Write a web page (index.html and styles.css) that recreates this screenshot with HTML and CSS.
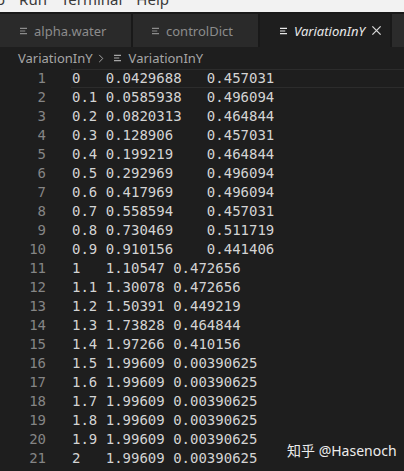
FILE: index.html
```html
<!DOCTYPE html>
<html>
<head>
<meta charset="utf-8">
<link rel="stylesheet" href="styles.css">
</head>
<body>
<div class="menubar"><div class="menu-items"><span class="m0">o</span><span>Run</span><span>Terminal</span><span>Help</span></div></div>
<div class="tabbar">
  <div class="tab t1"><svg class="ficon" viewBox="0 0 8 9"><path d="M0 1.5H8M0 4.5H6M0 7.5H8" /></svg><span>alpha.water</span></div>
  <div class="tab t2"><svg class="ficon" viewBox="0 0 8 9"><path d="M0 1.5H8M0 4.5H6M0 7.5H8" /></svg><span>controlDict</span></div>
  <div class="tab active"><svg class="ficon" viewBox="0 0 8 9"><path d="M0 1.5H8M0 4.5H6M0 7.5H8" /></svg><span class="ital">VariationInY</span><svg class="close" viewBox="0 0 12 12"><path d="M1.5 1.5L10.5 10.5M10.5 1.5L1.5 10.5"/></svg></div>
  <div class="tab-rest"></div>
</div>
<div class="crumbs"><span>VariationInY</span><svg class="chev" viewBox="0 0 6 10"><path d="M1 1L5 5L1 9"/></svg><svg class="ficon" viewBox="0 0 8 9"><path d="M0 1.5H8M0 4.5H6M0 7.5H8" /></svg><span>VariationInY</span></div>
<div class="editor">
<div class="row current"><span class="ln">1</span><span class="code">0	0.0429688	0.457031</span></div>
<div class="row"><span class="ln">2</span><span class="code">0.1 0.0585938	0.496094</span></div>
<div class="row"><span class="ln">3</span><span class="code">0.2 0.0820313	0.464844</span></div>
<div class="row"><span class="ln">4</span><span class="code">0.3 0.128906	0.457031</span></div>
<div class="row"><span class="ln">5</span><span class="code">0.4 0.199219	0.464844</span></div>
<div class="row"><span class="ln">6</span><span class="code">0.5 0.292969	0.496094</span></div>
<div class="row"><span class="ln">7</span><span class="code">0.6 0.417969	0.496094</span></div>
<div class="row"><span class="ln">8</span><span class="code">0.7 0.558594	0.457031</span></div>
<div class="row"><span class="ln">9</span><span class="code">0.8 0.730469	0.511719</span></div>
<div class="row"><span class="ln">10</span><span class="code">0.9 0.910156	0.441406</span></div>
<div class="row"><span class="ln">11</span><span class="code">1	1.10547 0.472656</span></div>
<div class="row"><span class="ln">12</span><span class="code">1.1 1.30078 0.472656</span></div>
<div class="row"><span class="ln">13</span><span class="code">1.2 1.50391 0.449219</span></div>
<div class="row"><span class="ln">14</span><span class="code">1.3 1.73828 0.464844</span></div>
<div class="row"><span class="ln">15</span><span class="code">1.4 1.97266 0.410156</span></div>
<div class="row"><span class="ln">16</span><span class="code">1.5 1.99609 0.00390625</span></div>
<div class="row"><span class="ln">17</span><span class="code">1.6 1.99609 0.00390625</span></div>
<div class="row"><span class="ln">18</span><span class="code">1.7 1.99609 0.00390625</span></div>
<div class="row"><span class="ln">19</span><span class="code">1.8 1.99609 0.00390625</span></div>
<div class="row"><span class="ln">20</span><span class="code">1.9 1.99609 0.00390625</span></div>
<div class="row"><span class="ln">21</span><span class="code">2	1.99609 0.00390625</span></div>
</div>
<div class="watermark">知乎 @Hasenoch</div>
</body>
</html>
```
FILE: styles.css
```css
html, body {
  margin: 0;
  padding: 0;
  background: #1e1e1e;
  width: 404px;
  height: 471px;
  overflow: hidden;
  position: relative;
}
.menubar {
  height: 12px;
  background: #f2f2f2;
  overflow: hidden;
  font-family: "Noto Sans", sans-serif;
  font-size: 15px;
  color: #3a3a3a;
}
.menu-items {
  display: flex;
  gap: 14px;
  margin-top: -12px;
  margin-left: -4px;
  line-height: 22px;
}
.menu-items .m0 { margin-right: 0; }
.tabbar {
  display: flex;
  height: 35px;
  background: #191919;
  padding-top: 2px;
  box-sizing: border-box;
  font-family: "Noto Sans", sans-serif;
  font-size: 13px;
  gap: 2px;
}
.tab {
  display: flex;
  align-items: center;
  height: 33px;
  background: #2a2a2a;
  color: #8c8c8c;
  box-sizing: border-box;
  padding-left: 20px;
}
.t1 { width: 131px; }
.t2 { width: 125px; padding-left: 19px; }
.tab.active {
  width: 130px;
  background: #1e1e1e;
  color: #e8e8e8;
}
.tab-rest {
  flex: 1;
  height: 33px;
  background: #2b2b2b;
}
.ital { font-style: italic; }
.ficon {
  width: 7px;
  height: 8px;
  margin-right: 7px;
  stroke: currentColor;
  stroke-width: 1.2;
  fill: none;
  flex: none;
}
.close {
  width: 11px;
  height: 11px;
  margin-left: 6px;
  stroke: #d8d8d8;
  stroke-width: 1.4;
  fill: none;
}
.crumbs {
  display: flex;
  align-items: center;
  height: 22px;
  padding-left: 18px;
  font-family: "Noto Sans", sans-serif;
  font-size: 13px;
  color: #a6a6a6;
  background: #1e1e1e;
}
.chev {
  width: 6px;
  height: 9px;
  margin: 0 10px 0 5px;
  stroke: #a6a6a6;
  stroke-width: 1.1;
  fill: none;
}
.crumbs .ficon { margin-right: 8px; }
.editor {
  font-family: "DejaVu Sans Mono", monospace;
  font-size: 14px;
  color: #d4d4d4;
}
.row {
  display: flex;
  height: 19px;
  line-height: 19px;
}
.ln {
  width: 46px;
  text-align: right;
  color: #858585;
  flex: none;
}
.code {
  margin-left: 25px;
  padding-left: 1px;
  flex: 1;
  white-space: pre;
  tab-size: 4;
  -moz-tab-size: 4;
}
.row.current .code {
  border-top: 1px solid #2c2c2c;
  border-bottom: 1px solid #2c2c2c;
  line-height: 17px;
}
.watermark {
  position: absolute;
  left: 287px;
  top: 440px;
  white-space: nowrap;
  font-family: "Noto Sans", "Noto Sans CJK SC", sans-serif;
  font-size: 14px;
  color: #ececec;
}
```
